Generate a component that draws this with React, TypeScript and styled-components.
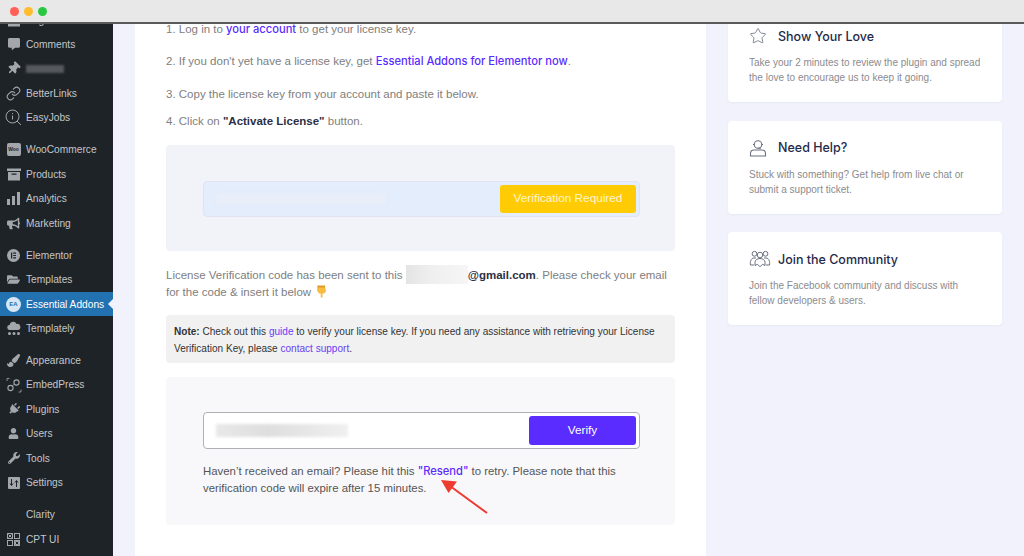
import type { ReactNode } from "react";
import styled, { createGlobalStyle } from "styled-components";
import {
  FaBullhorn,
  FaCommentAlt,
  FaFolderOpen,
  FaPaintBrush,
  FaPlug,
  FaThumbtack,
  FaUser,
  FaWrench,
} from "react-icons/fa";
import { Link as ChainLink, Star } from "lucide-react";

const Global = createGlobalStyle`
  html, body {
    margin: 0;
    padding: 0;
    height: 556px;
    overflow: hidden;
    background: #f1f2fb;
    font-family: "Liberation Sans", Arial, sans-serif;
  }
  * { box-sizing: border-box; }
`;

/* sidebar icons which the icon packages don't have */
const Archive = () => (
  <svg width="14" height="13" viewBox="0 0 14 13" fill="currentColor">
    <rect x="0" y="0.5" width="14" height="2.5" />
    <path d="M1 4h12v8.5H1zM4.5 5.5v1.2h5V5.5z" fillRule="evenodd" />
  </svg>
);
const Bars = () => (
  <svg width="13" height="13" viewBox="0 0 13 13" fill="currentColor">
    <rect x="0" y="7" width="3" height="6" />
    <rect x="5" y="4" width="3" height="9" />
    <rect x="10" y="0" width="3" height="13" />
  </svg>
);
const EasyJobs = () => (
  <svg width="17" height="17" viewBox="0 0 17 17" fill="none" stroke="currentColor" strokeWidth="1">
    <circle cx="7.5" cy="7.5" r="6.5" />
    <path d="M7.5 6.5v4M7.5 4v1M12 12l4 4" />
  </svg>
);
const Woo = () => <WooBadge>Woo</WooBadge>;
const Elementor = () => (
  <svg width="13" height="13" viewBox="0 0 13 13">
    <circle cx="6.5" cy="6.5" r="6.5" fill="currentColor" />
    <path d="M4 3.5h1.2v6H4zM6.2 3.5H9v1.2H6.2zM6.2 5.9H9v1.2H6.2zM6.2 8.3H9v1.2H6.2z" fill="#1d2327" />
  </svg>
);
const EaLogo = () => <EaBadge>EA</EaBadge>;
const Templately = () => (
  <svg width="14" height="15" viewBox="0 0 14 15" fill="currentColor">
    <path d="M3 9a2.5 2.5 0 0 1-.4-5A3.6 3.6 0 0 1 9.500 3 3 3 0 0 1 11 9z" />
    <rect x="1" y="11" width="3" height="3" rx="1.5" />
    <rect x="5.5" y="11" width="3" height="3" rx="1.5" />
    <rect x="10" y="11" width="3" height="3" rx="1.5" />
  </svg>
);
const EmbedPress = () => (
  <svg width="16" height="16" viewBox="0 0 16 16" fill="none" stroke="currentColor" strokeWidth="1.1">
    <circle cx="4.5" cy="11" r="2.6" />
    <circle cx="10.5" cy="5.5" r="2.6" />
    <path d="M6.5 9l2-2M1 4V1.5h2.5M15 12.5V15h-2.5" strokeWidth="0.8" />
  </svg>
);
const Sliders = () => (
  <svg width="12" height="12" viewBox="0 0 12 12">
    <rect width="12" height="12" rx="1" fill="currentColor" />
    <path d="M3.5 2v6M2 6.5l1.5 2 1.5-2M8.500 10V4M7 5.500l1.500-2 1.500 2" stroke="#1d2327" fill="none" strokeWidth="1" />
  </svg>
);
const CptGrid = () => (
  <svg width="13" height="13" viewBox="0 0 13 13" fill="none" stroke="currentColor" strokeWidth="1">
    <rect x="0.5" y="0.5" width="5" height="5" />
    <rect x="7.5" y="0.5" width="5" height="5" />
    <rect x="0.5" y="7.5" width="5" height="5" />
    <rect x="7.5" y="7.5" width="5" height="5" />
    <path d="M1.500 1.500l3 3M4.500 1.500l-3 3M8.500 8.500h3v3h-3z" />
  </svg>
);

/* card icons */
const HelpPerson = () => (
  <svg width="18" height="18" viewBox="0 0 18 18" fill="none" stroke="#6b7080" strokeWidth="1.1">
    <circle cx="9" cy="5.500" r="3.800" />
    <path d="M4 5.500h1.400M12.600 5.500H14M9 9.300h3" />
    <path d="M1.500 17v-2.500c0-2 1.600-3.500 3.500-3.500h8c2 0 3.500 1.500 3.500 3.500V17z" />
  </svg>
);
const People = () => (
  <svg width="22" height="18" viewBox="0 0 22 18" fill="none" stroke="#6b7080" strokeWidth="1">
    <circle cx="11" cy="5" r="2.800" />
    <circle cx="5.500" cy="3.800" r="2.400" />
    <circle cx="16.500" cy="3.800" r="2.400" />
    <path d="M6 15.500v-3.200c0-2 2-3.800 5-3.800s5 1.800 5 3.800v3.200l-2.500-1.200-2.500 2.500-2.500-2.500z" />
    <path d="M5 15H1.500c-.6-3 .5-7 3.500-7h2M17 15h3.500c.6-3-.5-7-3.500-7h-2" />
  </svg>
);

const HandDown = () => (
  <HandIcon width="11" height="13" viewBox="0 0 11 13">
    <path d="M1.500 1h7.500l1 5.500-2 2H6.500V12c0 1-1.800 1-1.800 0V8.500H3L1 5.500z" fill="#f6bd41" />
    <rect x="1.500" y="0.500" width="7.500" height="2" fill="#e09a2b" />
  </HandIcon>
);

type NavEntry = { id: string; label: string; icon: ReactNode; gap?: boolean; active?: boolean; masked?: boolean };

const nav: NavEntry[] = [
  { id: "pages", label: "Pages", icon: <Archive /> },
  { id: "comments", label: "Comments", icon: <FaCommentAlt size={12} /> },
  { id: "posts", label: "Posts", icon: <FaThumbtack size={13} style={{ transform: "rotate(45deg)" }} />, masked: true },
  { id: "links", label: "BetterLinks", icon: <ChainLink size={15} strokeWidth={1.7} /> },
  { id: "jobs", label: "EasyJobs", icon: <EasyJobs /> },
  { id: "woo", label: "WooCommerce", icon: <Woo />, gap: true },
  { id: "products", label: "Products", icon: <Archive /> },
  { id: "analytics", label: "Analytics", icon: <Bars /> },
  { id: "marketing", label: "Marketing", icon: <FaBullhorn size={13} /> },
  { id: "elementor", label: "Elementor", icon: <Elementor />, gap: true },
  { id: "templates", label: "Templates", icon: <FaFolderOpen size={13} /> },
  { id: "ea", label: "Essential Addons", icon: <EaLogo />, active: true },
  { id: "templately", label: "Templately", icon: <Templately /> },
  { id: "appearance", label: "Appearance", icon: <FaPaintBrush size={13} />, gap: true },
  { id: "embedpress", label: "EmbedPress", icon: <EmbedPress /> },
  { id: "plugins", label: "Plugins", icon: <FaPlug size={12} style={{ transform: "rotate(45deg)" }} /> },
  { id: "users", label: "Users", icon: <FaUser size={11} /> },
  { id: "tools", label: "Tools", icon: <FaWrench size={12} /> },
  { id: "settings", label: "Settings", icon: <Sliders /> },
  { id: "clarity", label: "Clarity", icon: null, gap: true },
  { id: "cpt", label: "CPT UI", icon: <CptGrid /> },
  { id: "more", label: "", icon: <Archive /> },
];

const cards = [
  {
    title: "Show Your Love",
    icon: <Star size={18} strokeWidth={1.1} color="#6b7080" />,
    text: ["Take your 2 minutes to review the plugin and spread", "the love to encourage us to keep it going."],
  },
  {
    title: "Need Help?",
    icon: <HelpPerson />,
    text: ["Stuck with something? Get help from live chat or", "submit a support ticket."],
  },
  {
    title: "Join the Community",
    icon: <People />,
    text: ["Join the Facebook community and discuss with", "fellow developers & users."],
  },
];

export default function App() {
  return (
    <>
      <Global />
      <Window>
        <TitleBar>
          <Light $color="#ff5f57" />
          <Light $color="#febc2e" />
          <Light $color="#28c840" />
        </TitleBar>
        <Body>
          <Sidebar>
            <NavList>
              {nav.map((item) => (
                <NavItem key={item.id} $gap={item.gap} $active={item.active}>
                  <NavIcon>{item.icon}</NavIcon>
                  {item.masked ? <NavMask /> : <span>{item.label}</span>}
                  {item.active && <ActiveNotch />}
                </NavItem>
              ))}
            </NavList>
          </Sidebar>
          <Content>
            <Panel>
              <Step $top={-2}>
                1. Log in to <Accent>your account</Accent> to get your license key.
              </Step>
              <Step $top={17}>
                2. If you don't yet have a license key, get <Accent>Essential Addons for Elementor now</Accent>.
              </Step>
              <Step $top={18}>3. Copy the license key from your account and paste it below.</Step>
              <Step $top={12}>
                4. Click on <Strong>"Activate License"</Strong> button.
              </Step>
              <LicenseBox>
                <KeyField>
                  <KeyMask />
                  <YellowButton>Verification Required</YellowButton>
                </KeyField>
              </LicenseBox>
              <Sent>
                License Verification code has been sent to this <EmailMask />
                <Strong>@gmail.com</Strong>. Please check your email
                <br />
                for the code &amp; insert it below
                <HandDown />
              </Sent>
              <Note>
                <b>Note:</b> Check out this <NoteLink>guide</NoteLink> to verify your license key. If you need any
                assistance with retrieving your License
                <br />
                Verification Key, please <NoteLink>contact support</NoteLink>.
              </Note>
              <VerifyBox>
                <CodeField>
                  <CodeMask />
                  <VerifyButton>Verify</VerifyButton>
                </CodeField>
                <Resend>
                  Haven’t received an email? Please hit this <Accent>"Resend"</Accent> to retry. Please note that this
                  <br />
                  verification code will expire after 15 minutes.
                </Resend>
                <Arrow width="52" height="36" viewBox="0 0 52 36">
                  <path d="M47 34L10 7" stroke="#ee3b30" strokeWidth="2" />
                  <path d="M1 1l16 1.500-8.500 11.500z" fill="#ee3b30" />
                </Arrow>
              </VerifyBox>
            </Panel>
            <Aside>
              {cards.map((card) => (
                <Card key={card.title}>
                  <CardHead>
                    <CardIcon>{card.icon}</CardIcon>
                    <CardTitle>{card.title}</CardTitle>
                  </CardHead>
                  <CardText>
                    {card.text[0]}
                    <br />
                    {card.text[1]}
                  </CardText>
                </Card>
              ))}
            </Aside>
          </Content>
        </Body>
      </Window>
    </>
  );
}

const Window = styled.div`
  width: 1024px;
  height: 556px;
  display: flex;
  flex-direction: column;
  overflow: hidden;
`;

const TitleBar = styled.header`
  height: 24px;
  flex: none;
  display: flex;
  align-items: center;
  gap: 5px;
  padding: 0 0 0 10px;
  background: #e8e8e8;
  border-bottom: 2px solid #5a5a5a;
  position: relative;
  z-index: 2;
`;

const Light = styled.span<{ $color: string }>`
  width: 9px;
  height: 9px;
  border-radius: 50%;
  background: ${(p) => p.$color};
`;

const Body = styled.div`
  flex: 1;
  min-height: 0;
  display: flex;
`;

const Sidebar = styled.nav`
  width: 113px;
  flex: none;
  background: #1d2327;
  overflow: hidden;
`;

const NavList = styled.ul`
  list-style: none;
  margin: -16.2px 0 0;
  padding: 0;
`;

const NavItem = styled.li<{ $gap?: boolean; $active?: boolean }>`
  height: 24.45px;
  margin-top: ${(p) => (p.$gap ? "7.6px" : "0")};
  display: flex;
  align-items: center;
  position: relative;
  color: ${(p) => (p.$active ? "#ffffff" : "#c3c6ca")};
  background: ${(p) => (p.$active ? "#2271b1" : "transparent")};
  font-size: 10.2px;
  white-space: nowrap;
`;

const NavIcon = styled.span`
  width: 26px;
  flex: none;
  display: flex;
  justify-content: center;
  padding-left: 1px;
  color: #a3a7ac;
`;

const NavMask = styled.span`
  width: 38px;
  height: 8px;
  background: #55585c;
  filter: blur(1px);
`;

const ActiveNotch = styled.span`
  position: absolute;
  right: 0;
  top: 7px;
  border: 5px solid transparent;
  border-right-color: #f1f2fb;
  border-left: 0;
`;

const WooBadge = styled.span`
  width: 14px;
  height: 13px;
  border-radius: 2px;
  background: #a3a7ac;
  color: #1d2327;
  font-size: 5px;
  font-weight: 700;
  line-height: 13px;
  text-align: center;
`;

const EaBadge = styled.span`
  width: 15px;
  height: 15px;
  border-radius: 50%;
  background: #d7e6f4;
  color: #2271b1;
  font-size: 6px;
  font-weight: 700;
  line-height: 15px;
  text-align: center;
`;

const Content = styled.main`
  flex: 1;
  display: flex;
  padding-left: 22px;
  background: #f1f2fb;
`;

const Panel = styled.section`
  width: 571px;
  flex: none;
  background: #ffffff;
  padding: 0 31px;
  font-size: 11.5px;
  color: #808080;
`;

const Step = styled.p<{ $top: number }>`
  margin: ${(p) => p.$top}px 0 0;
  line-height: 15px;
`;

const Accent = styled.span`
  font-family: Inter, "Liberation Sans", sans-serif;
  font-size: 11.15px;
  color: #5a2cff;
  font-weight: 500;
`;

const Strong = styled.span`
  color: #2b2f45;
  font-weight: 700;
`;

const LicenseBox = styled.div`
  margin-top: 16px;
  height: 106px;
  padding: 36px 35px 0 37px;
  background: #f2f3f9;
  border-radius: 4px;
`;

const KeyField = styled.div`
  height: 36px;
  display: flex;
  align-items: center;
  justify-content: space-between;
  padding: 0 3px 0 12px;
  background: #e3edfc;
  border: 1px solid #dfe4f0;
  border-radius: 4px;
`;

const KeyMask = styled.span`
  width: 170px;
  height: 12px;
  background: #e9eef8;
  filter: blur(2px);
`;

const YellowButton = styled.span`
  width: 136px;
  height: 28px;
  border-radius: 3px;
  background: #ffcb05;
  color: #fff6d2;
  font-size: 11.8px;
  line-height: 27px;
  text-align: center;
`;

const Sent = styled.p`
  margin: 14px 0 0;
  line-height: 16px;
  white-space: nowrap;
`;

const HandIcon = styled.svg`
  vertical-align: -2px;
  margin-left: 5px;
`;

const EmailMask = styled.span`
  display: inline-block;
  width: 62px;
  height: 19px;
  vertical-align: -5px;
  background: linear-gradient(90deg, #e4e4e4, #efefef 40%, #f6f6f6);
`;

const Note = styled.div`
  margin-top: 15px;
  height: 48px;
  padding: 8px 8px;
  background: #f1f1f1;
  border-radius: 4px;
  color: #333333;
  font-size: 10.05px;
  line-height: 17px;
  white-space: nowrap;
`;

const NoteLink = styled.span`
  color: #6a3cf5;
`;

const VerifyBox = styled.div`
  position: relative;
  margin-top: 14px;
  height: 148px;
  padding: 35px 35px 0 37px;
  background: #f8f8fb;
  border-radius: 4px;
`;

const CodeField = styled.div`
  height: 37px;
  display: flex;
  align-items: center;
  justify-content: space-between;
  padding: 0 3px 0 12px;
  background: #ffffff;
  border: 1px solid #b0b0b4;
  border-radius: 4px;
`;

const CodeMask = styled.span`
  width: 132px;
  height: 13px;
  background: linear-gradient(90deg, #e8e8e8, #dedede 40%, #f0f0f0);
  filter: blur(1.5px);
`;

const VerifyButton = styled.span`
  width: 107px;
  height: 29px;
  border-radius: 3px;
  background: #5a2cff;
  color: #ffffff;
  font-size: 11.8px;
  line-height: 29px;
  text-align: center;
`;

const Resend = styled.p`
  margin: 14px 0 0;
  line-height: 17px;
  font-size: 11.4px;
  color: #555555;
  white-space: nowrap;
`;

const Arrow = styled.svg`
  position: absolute;
  left: 274px;
  top: 102px;
`;

const Aside = styled.aside`
  width: 274px;
  margin-left: 22px;
  display: flex;
  flex-direction: column;
  gap: 18.5px;
`;

const Card = styled.article`
  padding: 18px 21px 0;
  height: 93px;
  background: #ffffff;
  border-radius: 4px;
  box-shadow: 0 1px 2px rgba(40, 50, 90, 0.05);
  &:first-child {
    margin-top: -15px;
  }
`;

const CardHead = styled.div`
  height: 18px;
  display: flex;
  align-items: center;
`;

const CardIcon = styled.span`
  width: 29px;
  flex: none;
  display: flex;
`;

const CardTitle = styled.h3`
  margin: 0;
  font-family: Inter, "Liberation Sans", sans-serif;
  color: #1f2a4a;
  font-size: 12.5px;
  font-weight: 500;
`;

const CardText = styled.p`
  margin: 10px 0 0;
  color: #8b8b8f;
  font-size: 10px;
  line-height: 15px;
  white-space: nowrap;
`;
